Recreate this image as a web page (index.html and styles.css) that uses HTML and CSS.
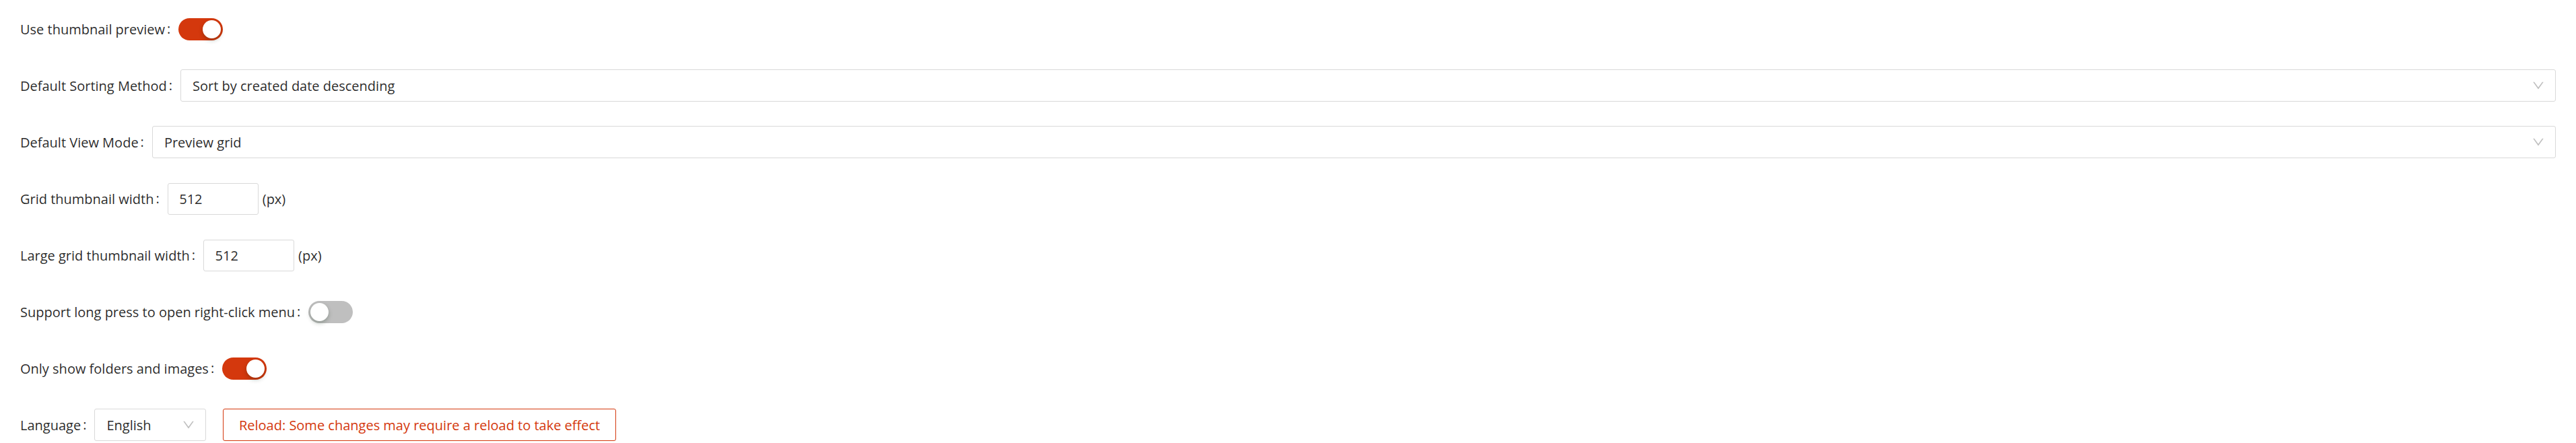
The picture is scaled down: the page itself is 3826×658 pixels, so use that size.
FILE: index.html
```html
<!DOCTYPE html>
<html lang="en">
<head>
<meta charset="utf-8">
<title>Settings</title>
<link rel="stylesheet" href="styles.css">
</head>
<body>
<form class="settings">
  <div class="form-item">
    <label class="label">Use thumbnail preview</label>
    <div class="control">
      <button type="button" class="switch switch-on" role="switch" aria-checked="true"><span class="handle"></span></button>
    </div>
  </div>

  <div class="form-item">
    <label class="label">Default Sorting Method</label>
    <div class="control control-grow">
      <div class="select select-full">
        <span class="select-value">Sort by created date descending</span>
        <svg class="select-arrow" viewBox="64 64 896 896" aria-hidden="true"><path d="M884 256h-75c-5.1 0-9.9 2.5-12.9 6.6L512 654.2 227.9 262.6c-3-4.1-7.8-6.6-12.9-6.6h-75c-6.5 0-10.3 7.4-6.5 12.7l352.6 486.1c12.8 17.6 39 17.6 51.7 0l352.6-486.1c3.9-5.3.1-12.7-6.4-12.7z"/></svg>
      </div>
    </div>
  </div>

  <div class="form-item">
    <label class="label">Default View Mode</label>
    <div class="control control-grow">
      <div class="select select-full">
        <span class="select-value">Preview grid</span>
        <svg class="select-arrow" viewBox="64 64 896 896" aria-hidden="true"><path d="M884 256h-75c-5.1 0-9.9 2.5-12.9 6.6L512 654.2 227.9 262.6c-3-4.1-7.8-6.6-12.9-6.6h-75c-6.5 0-10.3 7.4-6.5 12.7l352.6 486.1c12.8 17.6 39 17.6 51.7 0l352.6-486.1c3.9-5.3.1-12.7-6.4-12.7z"/></svg>
      </div>
    </div>
  </div>

  <div class="form-item">
    <label class="label">Grid thumbnail width</label>
    <div class="control">
      <div class="input-number"><span class="input-value">512</span></div>
      <span class="unit">(px)</span>
    </div>
  </div>

  <div class="form-item">
    <label class="label">Large grid thumbnail width</label>
    <div class="control">
      <div class="input-number"><span class="input-value">512</span></div>
      <span class="unit">(px)</span>
    </div>
  </div>

  <div class="form-item">
    <label class="label">Support long press to open right-click menu</label>
    <div class="control">
      <button type="button" class="switch" role="switch" aria-checked="false"><span class="handle"></span></button>
    </div>
  </div>

  <div class="form-item">
    <label class="label">Only show folders and images</label>
    <div class="control">
      <button type="button" class="switch switch-on" role="switch" aria-checked="true"><span class="handle"></span></button>
    </div>
  </div>

  <div class="form-item form-item-last">
    <label class="label">Language</label>
    <div class="control">
      <div class="select select-lang">
        <span class="select-value">English</span>
        <svg class="select-arrow" viewBox="64 64 896 896" aria-hidden="true"><path d="M884 256h-75c-5.1 0-9.9 2.5-12.9 6.6L512 654.2 227.9 262.6c-3-4.1-7.8-6.6-12.9-6.6h-75c-6.5 0-10.3 7.4-6.5 12.7l352.6 486.1c12.8 17.6 39 17.6 51.7 0l352.6-486.1c3.9-5.3.1-12.7-6.4-12.7z"/></svg>
      </div>
      <button type="button" class="btn-reload">Reload: Some changes may require a reload to take effect</button>
    </div>
  </div>
</form>
</body>
</html>
```

FILE: styles.css
```css
html, body {
  margin: 0;
  padding: 0;
  background: #ffffff;
}

body {
  font-family: "Open Sans", "Noto Sans", "Liberation Sans", sans-serif;
  font-size: 20px;
  color: rgba(0, 0, 0, 0.85);
}

.settings {
  display: flex;
  flex-direction: column;
  gap: 36px;
  padding: 19px 30px 0 30px;
  margin: 0;
}

.form-item {
  display: flex;
  align-items: center;
  height: 48px;
}

.label {
  flex: none;
  display: inline-flex;
  align-items: center;
  height: 48px;
  white-space: nowrap;
  color: rgba(0, 0, 0, 0.85);
}

.label::after {
  content: ":";
  position: relative;
  top: -1px;
  margin: 0 12px 0 3px;
}

.control {
  display: flex;
  align-items: center;
  min-height: 48px;
}

.control-grow {
  flex: 1;
  min-width: 0;
}

/* switch */
.switch {
  position: relative;
  flex: none;
  width: 66px;
  height: 33px;
  padding: 0;
  border: 0;
  border-radius: 33px;
  background: #bfbfbf;
  cursor: pointer;
}

.switch .handle {
  position: absolute;
  top: 3px;
  left: 3px;
  width: 27px;
  height: 27px;
  border-radius: 50%;
  background: #ffffff;
  box-shadow: 0 3px 6px 0 rgba(0, 35, 11, 0.25);
}

.switch-on {
  background: #d4380d;
}

.switch-on .handle {
  left: 36px;
}

/* select */
.select {
  box-sizing: border-box;
  display: flex;
  align-items: center;
  height: 48px;
  padding: 0 16px 0 17px;
  border: 1.5px solid #d9d9d9;
  border-radius: 3px;
  background: #ffffff;
}

.select-full {
  flex: 1;
}

.select-lang {
  width: 166px;
  flex: none;
}

.select-value {
  flex: 1;
  white-space: nowrap;
  overflow: hidden;
  color: rgba(0, 0, 0, 0.85);
}

.select-arrow {
  flex: none;
  width: 18px;
  height: 18px;
  fill: rgba(0, 0, 0, 0.25);
}

/* input number */
.input-number {
  box-sizing: border-box;
  display: flex;
  align-items: center;
  width: 135px;
  height: 47px;
  padding: 0 16.5px;
  border: 1.5px solid #d9d9d9;
  border-radius: 3px;
  background: #ffffff;
}

.input-value {
  color: rgba(0, 0, 0, 0.85);
}

.unit {
  margin-left: 6px;
}

/* button */
.btn-reload {
  box-sizing: border-box;
  height: 48px;
  margin-left: 25px;
  padding: 0 22.5px;
  border: 1.5px solid #d4380d;
  border-radius: 3px;
  background: #ffffff;
  color: #d4380d;
  font-family: inherit;
  font-size: inherit;
  white-space: nowrap;
  box-shadow: 0 3px 0 rgba(0, 0, 0, 0.015);
  cursor: pointer;
}
```
